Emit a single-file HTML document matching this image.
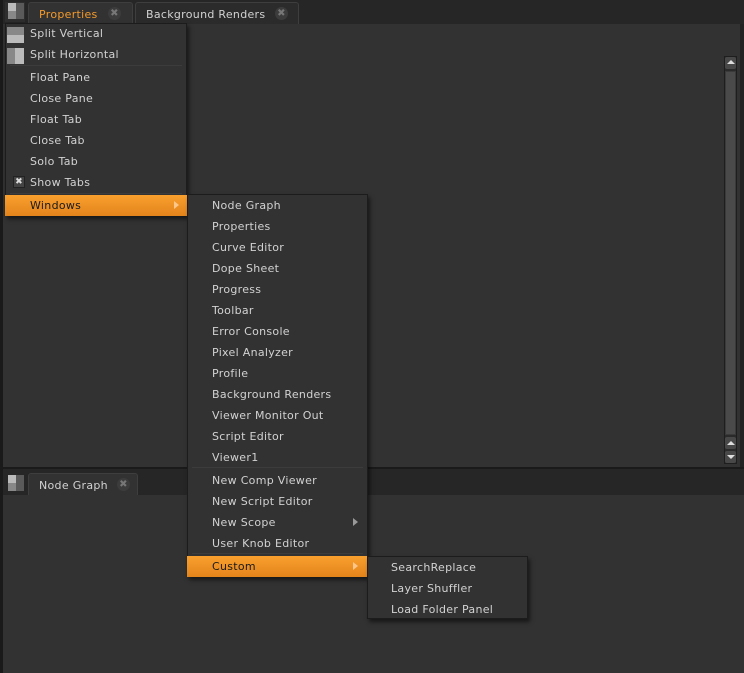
<!DOCTYPE html>
<html><head><style>
*{margin:0;padding:0;box-sizing:border-box}
body{width:744px;height:673px;background:#323232;position:relative;overflow:hidden;font-family:"DejaVu Sans","Liberation Sans",sans-serif;font-size:11px;color:#d2d2d2;letter-spacing:0.3px}
.abs{position:absolute}
.bar{background:#262626}
.tab{position:absolute;height:22px;border:1px solid #3e3e3e;border-bottom:none;border-radius:3px 3px 0 0;padding:5px 0 0 10px;background:#2b2b2b}
.x{position:absolute;width:13px;height:13px;border-radius:50%;background:#3c3c3c;color:#777;font-size:10px;line-height:13px;text-align:center;font-weight:bold}
.menu{position:absolute;background:#323232;border:1px solid #1c1c1c;box-shadow:2px 3px 4px rgba(0,0,0,.55)}
.it{position:absolute;left:0;right:0;height:21px;line-height:21px}
.hl{background:linear-gradient(#f9a02e,#e4841c);color:#1a1a1a}
.sep{position:absolute;height:1px;background:#222;border-bottom:1px solid #3c3c3c}
.arr{position:absolute;width:0;height:0;border-top:4px solid transparent;border-bottom:4px solid transparent;border-left:5px solid #999}
.icon{position:absolute;width:16px;height:16px}
</style></head><body>
<div class="abs" style="left:0;top:0;width:3px;height:673px;background:#1a1a1a"></div>
<div class="abs bar" style="left:3px;top:0;width:741px;height:24px"></div>
<div class="abs" style="left:5px;top:2px;width:20px;height:20px;background:#2e2e2e"></div>
<div class="abs" style="left:8px;top:3px;width:8px;height:16px;background:#bbb"></div>
<div class="abs" style="left:8px;top:11px;width:8px;height:8px;background:#888"></div>
<div class="abs" style="left:16px;top:3px;width:8px;height:16px;background:#5a5a5a"></div>
<div class="tab" style="left:28px;top:2px;width:105px;color:#f39a2c;background:#323232">Properties</div>
<div class="x" style="left:108px;top:7px">✖</div>
<div class="tab" style="left:135px;top:2px;width:164px">Background Renders</div>
<div class="x" style="left:275px;top:7px">✖</div>
<!-- scrollbar -->
<div class="abs" style="left:724px;top:56px;width:13px;height:408px;background:#2a2a2a;border:1px solid #1e1e1e"></div>
<div class="abs" style="left:725px;top:57px;width:11px;height:12px;background:#484848;border-radius:2px"></div>
<div class="abs" style="left:727px;top:60px;border-left:4px solid transparent;border-right:4px solid transparent;border-bottom:4px solid #ddd;width:0;height:0"></div>
<div class="abs" style="left:725px;top:71px;width:11px;height:364px;background:#4a4a4a;border:1px solid #3a3a3a"></div>
<div class="abs" style="left:725px;top:437px;width:11px;height:12px;background:#484848;border-radius:2px"></div>
<div class="abs" style="left:727px;top:441px;border-left:4px solid transparent;border-right:4px solid transparent;border-bottom:4px solid #ddd;width:0;height:0"></div>
<div class="abs" style="left:725px;top:451px;width:11px;height:12px;background:#484848;border-radius:2px"></div>
<div class="abs" style="left:727px;top:455px;border-left:4px solid transparent;border-right:4px solid transparent;border-top:4px solid #ddd;width:0;height:0"></div>
<div class="abs" style="left:740px;top:24px;width:4px;height:449px;background:#222"></div>
<!-- divider -->
<div class="abs" style="left:3px;top:467px;width:741px;height:2px;background:#1a1a1a"></div>
<div class="abs bar" style="left:3px;top:469px;width:741px;height:26px"></div>
<div class="abs" style="left:8px;top:475px;width:8px;height:16px;background:#bbb"></div>
<div class="abs" style="left:8px;top:483px;width:8px;height:8px;background:#888"></div>
<div class="abs" style="left:16px;top:475px;width:8px;height:16px;background:#5a5a5a"></div>
<div class="tab" style="left:28px;top:473px;width:110px;height:22px;background:#323232">Node Graph</div>
<div class="x" style="left:117px;top:478px">✖</div>
<!-- menu 1 -->
<div class="menu" style="left:5px;top:23px;width:182px;height:193px">
 <div class="abs" style="left:1px;top:3px;width:17px;height:16px;background:#bbb"></div>
 <div class="abs" style="left:1px;top:3px;width:17px;height:8px;background:#888"></div>
 <div class="abs" style="left:1px;top:24px;width:17px;height:16px;background:#bbb"></div>
 <div class="abs" style="left:1px;top:24px;width:8px;height:16px;background:#888"></div>
 <div class="it" style="top:-1px;padding-left:24px">Split Vertical</div>
 <div class="it" style="top:20px;padding-left:24px">Split Horizontal</div>
 <div class="sep" style="left:4px;right:4px;top:41px"></div>
 <div class="it" style="top:43px;padding-left:24px">Float Pane</div>
 <div class="it" style="top:64px;padding-left:24px">Close Pane</div>
 <div class="it" style="top:85px;padding-left:24px">Float Tab</div>
 <div class="it" style="top:106px;padding-left:24px">Close Tab</div>
 <div class="it" style="top:127px;padding-left:24px">Solo Tab</div>
 <div class="abs" style="left:7px;top:152px;width:12px;height:12px;background:#444;border:1px solid #222;color:#ddd;font-size:9px;line-height:10px;text-align:center">✖</div>
 <div class="it" style="top:148px;padding-left:24px">Show Tabs</div>
 <div class="sep" style="left:4px;right:4px;top:169px"></div>
 <div class="it hl" style="top:171px;left:-1px;right:-1px;padding-left:25px">Windows</div>
 <div class="arr" style="left:168px;top:177px;border-left-color:#ffc68a"></div>
</div>
<!-- menu 2 -->
<div class="menu" style="left:187px;top:194px;width:181px;height:383px">
 <div class="it" style="top:0;padding-left:24px">Node Graph</div>
 <div class="it" style="top:21px;padding-left:24px">Properties</div>
 <div class="it" style="top:42px;padding-left:24px">Curve Editor</div>
 <div class="it" style="top:63px;padding-left:24px">Dope Sheet</div>
 <div class="it" style="top:84px;padding-left:24px">Progress</div>
 <div class="it" style="top:105px;padding-left:24px">Toolbar</div>
 <div class="it" style="top:126px;padding-left:24px">Error Console</div>
 <div class="it" style="top:147px;padding-left:24px">Pixel Analyzer</div>
 <div class="it" style="top:168px;padding-left:24px">Profile</div>
 <div class="it" style="top:189px;padding-left:24px">Background Renders</div>
 <div class="it" style="top:210px;padding-left:24px">Viewer Monitor Out</div>
 <div class="it" style="top:231px;padding-left:24px">Script Editor</div>
 <div class="it" style="top:252px;padding-left:24px">Viewer1</div>
 <div class="sep" style="left:4px;right:4px;top:272px"></div>
 <div class="it" style="top:275px;padding-left:24px">New Comp Viewer</div>
 <div class="it" style="top:296px;padding-left:24px">New Script Editor</div>
 <div class="it" style="top:317px;padding-left:24px">New Scope</div>
 <div class="arr" style="left:165px;top:323px"></div>
 <div class="it" style="top:338px;padding-left:24px">User Knob Editor</div>
 <div class="sep" style="left:4px;right:4px;top:358px"></div>
 <div class="it hl" style="top:361px;left:-1px;right:-1px;padding-left:25px">Custom</div>
 <div class="arr" style="left:165px;top:367px;border-left-color:#ffc68a"></div>
</div>
<!-- menu 3 -->
<div class="menu" style="left:367px;top:556px;width:161px;height:63px">
 <div class="it" style="top:0;padding-left:23px">SearchReplace</div>
 <div class="it" style="top:21px;padding-left:23px">Layer Shuffler</div>
 <div class="it" style="top:42px;padding-left:23px">Load Folder Panel</div>
</div>
</body></html>
